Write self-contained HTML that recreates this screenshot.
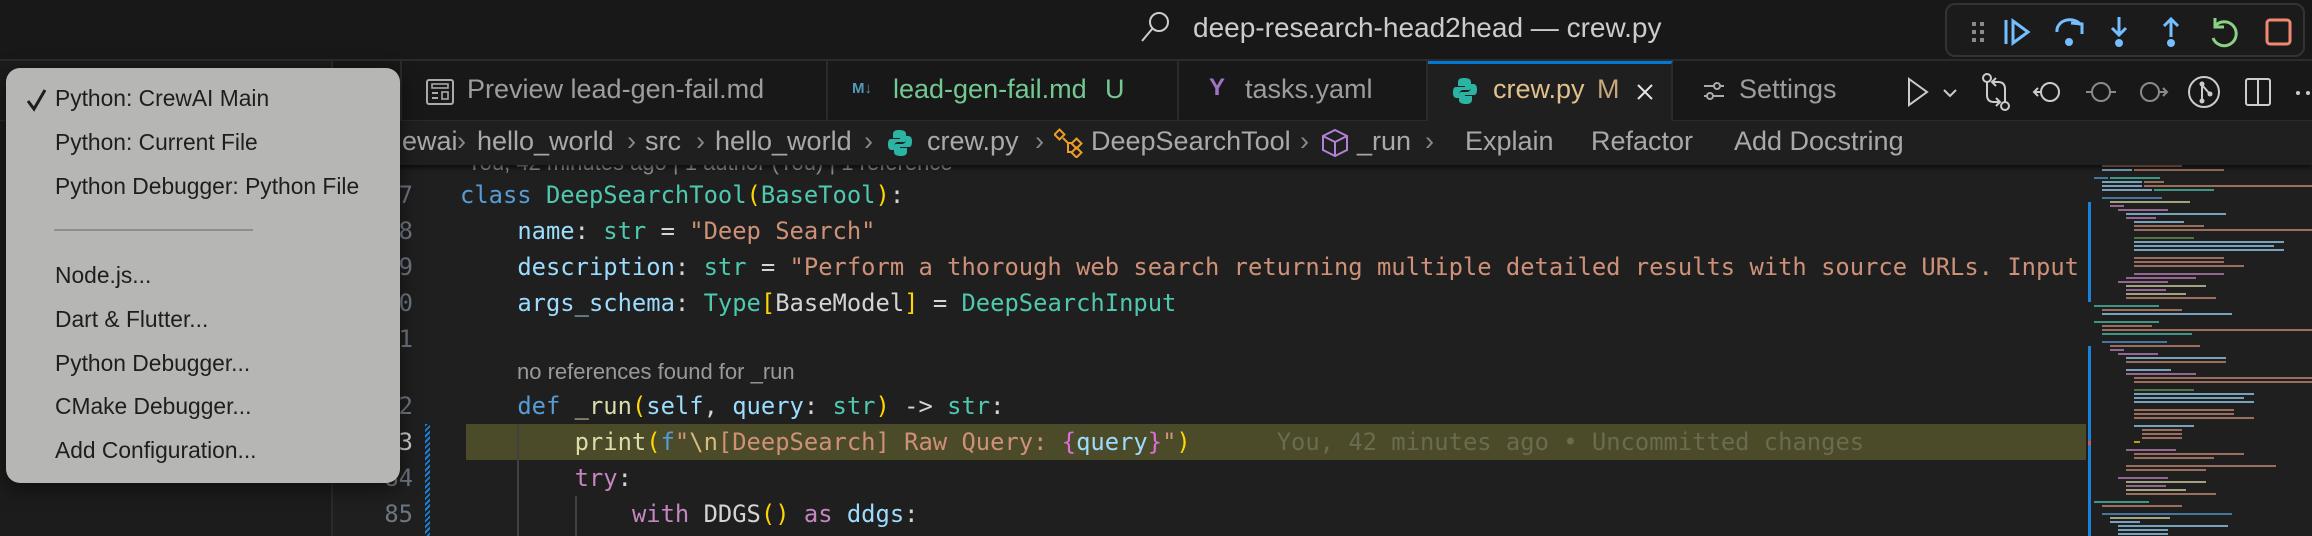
<!DOCTYPE html>
<html><head><meta charset="utf-8">
<style>
*{margin:0;padding:0;box-sizing:border-box}
body{width:2312px;height:536px;overflow:hidden;background:#1f1f1f;position:relative;font-family:"Liberation Sans",sans-serif}
.abs{position:absolute}
.ui{font-family:"Liberation Sans",sans-serif;font-size:27px;white-space:nowrap}
#title{left:0;top:0;width:2312px;height:61px;background:#181818;border-bottom:2px solid #2b2b2b}
#tabs{left:0;top:61px;width:2312px;height:60px;background:#181818;border-bottom:1px solid #2b2b2b}
.tab{position:absolute;top:0;height:59px;border-right:2px solid #2b2b2b;background:#181818}
#bc{left:335px;top:121px;width:1977px;height:44px;background:#1f1f1f;box-shadow:0 3px 4px rgba(0,0,0,.55);z-index:3}
.code{font-family:"DejaVu Sans Mono",monospace;font-size:23.8px;white-space:pre;position:absolute;left:460px;height:36px;line-height:36px;color:#d4d4d4}
.ln{font-family:"DejaVu Sans Mono",monospace;font-size:23.8px;position:absolute;left:300px;width:113px;height:36px;line-height:36px;color:#6e7681;text-align:right}
.k{color:#569cd6}.t{color:#4ec9b0}.v{color:#9cdcfe}.s{color:#ce9178}.p{color:#ffd700}.b{color:#da70d6}.f{color:#dcdcaa}.c{color:#c586c0}.e{color:#d7ba7d}.w{color:#d4d4d4}
#menu{left:6px;top:68px;width:394px;height:415px;background:#b6b6b4;border-radius:14px;z-index:10;box-shadow:0 6px 20px rgba(0,0,0,.5)}
.mi{position:absolute;left:49px;font-size:22.8px;color:#1e1e1e;font-family:"Liberation Sans",sans-serif;white-space:nowrap;line-height:30px}
</style></head><body>

<div id="title" class="abs">
  <svg class="abs" style="left:1138px;top:10px" width="34" height="34" viewBox="0 0 34 34"><circle cx="21" cy="12" r="9" fill="none" stroke="#cccccc" stroke-width="2"/><line x1="14.5" y1="18.5" x2="4" y2="31" stroke="#cccccc" stroke-width="2"/></svg>
  <div class="abs ui" style="left:1193px;top:12px;color:#cccccc;font-size:28px">deep-research-head2head — crew.py</div>
  <div class="abs" style="left:1945px;top:3px;width:360px;height:54px;border:2px solid #333;border-radius:10px;background:#1b1b1b">
    <svg class="abs" style="left:0;top:0" width="360" height="54" viewBox="0 0 360 54">
      <g fill="#8a8a8a"><rect x="25" y="17" width="4" height="4"/><rect x="33" y="17" width="4" height="4"/><rect x="25" y="25" width="4" height="4"/><rect x="33" y="25" width="4" height="4"/><rect x="25" y="33" width="4" height="4"/><rect x="33" y="33" width="4" height="4"/></g>
      <g stroke="#75beff" stroke-width="3" fill="none"><line x1="59" y1="15" x2="59" y2="39"/><path d="M66 16 L81 27 L66 38 Z"/></g>
      <g stroke="#75beff" stroke-width="3" fill="none"><path d="M110 27 A13 11 0 0 1 134 20"/><path d="M124 18 L135 19 L135 29"/></g><circle cx="122" cy="37" r="4" fill="#75beff"/>
      <g stroke="#75beff" stroke-width="3" fill="none"><line x1="172" y1="12" x2="172" y2="30"/><path d="M165 23 L172 30 L179 23"/></g><circle cx="172" cy="38" r="4" fill="#75beff"/>
      <g stroke="#75beff" stroke-width="3" fill="none"><line x1="224" y1="14" x2="224" y2="32"/><path d="M217 21 L224 14 L231 21"/></g><circle cx="224" cy="38" r="4" fill="#75beff"/>
      <g stroke="#89d185" stroke-width="3" fill="none"><path d="M268 21 A12 12 0 1 1 266 33"/><path d="M268 13 L268 22 L277 22"/></g>
      <rect x="320" y="15" width="23" height="24" rx="3" fill="none" stroke="#f48771" stroke-width="3"/>
    </svg>
  </div>
</div>

<div id="tabs" class="abs">
  <div class="tab" style="left:0;width:333px;background:#1c1c1c"></div>
  <div class="tab" style="left:333px;width:69px"></div>
  <div class="tab" style="left:402px;width:426px">
    <svg class="abs" style="left:24px;top:18px" width="28" height="26" viewBox="0 0 28 26"><rect x="1" y="1" width="26" height="24" rx="2" fill="none" stroke="#aaa" stroke-width="2"/><rect x="6" y="5" width="16" height="4" fill="none" stroke="#aaa" stroke-width="1.6"/><line x1="6" y1="14" x2="12" y2="14" stroke="#aaa" stroke-width="2"/><line x1="6" y1="19" x2="12" y2="19" stroke="#aaa" stroke-width="2"/><rect x="16" y="13" width="6" height="7" fill="none" stroke="#aaa" stroke-width="1.6"/></svg>
    <div class="abs ui" style="left:65px;top:13px;color:#9d9d9d">Preview lead-gen-fail.md</div>
  </div>
  <div class="tab" style="left:828px;width:351px">
    <div class="abs" style="left:24px;top:19px;color:#519aba;font-size:15px;font-weight:bold;font-family:'Liberation Sans',sans-serif">M↓</div>
    <div class="abs ui" style="left:65px;top:13px;color:#73c991">lead-gen-fail.md</div>
    <div class="abs ui" style="left:277px;top:13px;color:#73c991">U</div>
  </div>
  <div class="tab" style="left:1179px;width:249px">
    <div class="abs ui" style="left:30px;top:13px;color:#a074c4;font-weight:bold;font-size:24px">Y</div>
    <div class="abs ui" style="left:66px;top:13px;color:#9d9d9d">tasks.yaml</div>
  </div>
  <div class="tab" style="left:1428px;width:245px;background:#1f1f1f;border-top:3px solid #0078d4;height:60px">
    <svg class="abs" style="left:24px;top:13px" width="26" height="28" viewBox="0 0 26 28"><path d="M12 1 C6 1 6 4 6 6 V9 H13 V10 H4 C1 10 1 14 1 16 C1 20 3 21 5 21 H7 V17 C7 15 9 13 11 13 H17 C19 13 19 11 19 10 V5 C19 2 16 1 12 1 Z" fill="#2bb3a3"/><path d="M14 27 C20 27 20 24 20 22 V19 H13 V18 H22 C25 18 25 14 25 12 C25 8 23 7 21 7 H19 V11 C19 13 17 15 15 15 H9 C7 15 7 17 7 18 V23 C7 26 10 27 14 27 Z" fill="#2bb3a3"/></svg>
    <div class="abs ui" style="left:65px;top:10px;color:#e2c08d">crew.py</div>
    <div class="abs ui" style="left:169px;top:10px;color:#e2c08d;opacity:.85">M</div>
    <svg class="abs" style="left:208px;top:19px" width="18" height="18" viewBox="0 0 18 18"><path d="M2 2 L16 16 M16 2 L2 16" stroke="#e8e8e8" stroke-width="2"/></svg>
  </div>
  <svg class="abs" style="left:1703px;top:20px" width="22" height="20" viewBox="0 0 22 20"><line x1="1" y1="5" x2="21" y2="5" stroke="#aaa" stroke-width="2"/><line x1="1" y1="15" x2="21" y2="15" stroke="#aaa" stroke-width="2"/><circle cx="14" cy="5" r="3" fill="#181818" stroke="#aaa" stroke-width="2"/><circle cx="7" cy="15" r="3" fill="#181818" stroke="#aaa" stroke-width="2"/></svg>
  <div class="abs ui" style="left:1739px;top:13px;color:#9d9d9d">Settings</div>
  <svg class="abs" style="left:1900px;top:10px" width="412" height="40" viewBox="1900 10 412 40">
    <g fill="none" stroke="#cccccc" stroke-width="2">
      <path d="M1909 18 L1927 31 L1909 44 Z"/>
      <path d="M1944 29 L1950 35 L1956 29"/>
      <circle cx="1987" cy="17" r="4"/><circle cx="2005" cy="45" r="4"/>
      <path d="M1987 21 V34 Q1987 41 1994 41 H1999 M1996 37 L2000 41 L1996 45"/>
      <path d="M2005 41 V28 Q2005 21 1998 21 H1993 M1996 17 L1992 21 L1996 25"/>
      <circle cx="2050" cy="31" r="9"/><path d="M2041 31 H2034 M2038 27 L2034 31 L2038 35"/>
    </g>
    <g fill="none" stroke="#8a8a8a" stroke-width="2"><circle cx="2101" cy="31" r="9"/><path d="M2086 31 H2092 M2110 31 H2116"/>
      <circle cx="2150" cy="31" r="9"/><path d="M2159 31 H2167 M2163 27 L2167 31 L2163 35"/></g>
    <g fill="none" stroke="#cccccc" stroke-width="2"><circle cx="2204" cy="31" r="15"/><line x1="2202" y1="22" x2="2202" y2="41"/><line x1="2202" y1="24" x2="2209" y2="32"/></g>
    <circle cx="2202" cy="23" r="2.5" fill="#ccc"/><circle cx="2202" cy="40" r="2.5" fill="#ccc"/><circle cx="2210" cy="33" r="2.5" fill="#ccc"/>
    <g fill="none" stroke="#cccccc" stroke-width="2"><rect x="2246" y="18" width="24" height="26" rx="2"/><line x1="2258" y1="18" x2="2258" y2="44"/></g>
    <circle cx="2298" cy="32" r="2" fill="#ccc"/><circle cx="2308" cy="32" r="2" fill="#ccc"/>
  </svg>
</div>

<!-- left pane behind menu -->
<div class="abs" style="left:0;top:122px;width:333px;height:414px;background:#1c1c1c;border-right:2px solid #2b2b2b"></div>

<div id="bc" class="abs ui" style="color:#a9a9a9">
  <span class="abs" style="left:67px;top:5px">ewai</span>
  <span class="abs" style="left:122px;top:5px;color:#888">›</span>
  <span class="abs" style="left:142px;top:5px">hello_world</span>
  <span class="abs" style="left:292px;top:5px;color:#888">›</span>
  <span class="abs" style="left:310px;top:5px">src</span>
  <span class="abs" style="left:361px;top:5px;color:#888">›</span>
  <span class="abs" style="left:380px;top:5px">hello_world</span>
  <span class="abs" style="left:529px;top:5px;color:#888">›</span>
  <svg class="abs" style="left:552px;top:8px" width="26" height="28" viewBox="0 0 26 28"><path d="M12 1 C6 1 6 4 6 6 V9 H13 V10 H4 C1 10 1 14 1 16 C1 20 3 21 5 21 H7 V17 C7 15 9 13 11 13 H17 C19 13 19 11 19 10 V5 C19 2 16 1 12 1 Z" fill="#2bb3a3"/><path d="M14 27 C20 27 20 24 20 22 V19 H13 V18 H22 C25 18 25 14 25 12 C25 8 23 7 21 7 H19 V11 C19 13 17 15 15 15 H9 C7 15 7 17 7 18 V23 C7 26 10 27 14 27 Z" fill="#2bb3a3"/></svg>
  <span class="abs" style="left:592px;top:5px">crew.py</span>
  <span class="abs" style="left:700px;top:5px;color:#888">›</span>
  <svg class="abs" style="left:719px;top:7px" width="30" height="30" viewBox="0 0 30 30"><g fill="none" stroke="#ee9d28" stroke-width="2"><rect x="2" y="3" width="7" height="7" transform="rotate(45 5.5 6.5)"/><rect x="19" y="12" width="7" height="7" transform="rotate(45 22.5 15.5)"/><rect x="19" y="21" width="7" height="7" transform="rotate(45 22.5 24.5)"/><path d="M9 10 L14 15 H19 M14 15 V24 H19"/></g></svg>
  <span class="abs" style="left:756px;top:5px">DeepSearchTool</span>
  <span class="abs" style="left:965px;top:5px;color:#888">›</span>
  <svg class="abs" style="left:986px;top:7px" width="28" height="30" viewBox="0 0 28 30"><g fill="none" stroke="#b180d7" stroke-width="2"><path d="M14 2 L26 8 V22 L14 28 L2 22 V8 Z"/><path d="M2 8 L14 14 L26 8 M14 14 V28"/></g></svg>
  <span class="abs" style="left:1022px;top:5px">_run</span>
  <span class="abs" style="left:1090px;top:5px;color:#888">›</span>
  <span class="abs" style="left:1130px;top:5px">Explain</span>
  <span class="abs" style="left:1256px;top:5px">Refactor</span>
  <span class="abs" style="left:1399px;top:5px">Add Docstring</span>
</div>

<!-- editor -->
<div class="abs" style="left:335px;top:150px;width:1751px;height:386px;overflow:hidden;z-index:1">
  <div style="position:absolute;left:0;top:0;width:2086px;height:536px;transform:translate(-335px,-150px)">
    <div class="abs" style="left:466px;top:424px;width:1620px;height:36px;background:#4b4a29"></div>
    <div class="abs" style="left:517px;top:424px;width:2px;height:112px;background:#404040"></div>
    <div class="abs" style="left:575px;top:496px;width:2px;height:40px;background:#404040"></div>
    <div class="abs" style="left:425px;top:424px;width:5px;height:112px;background:repeating-linear-gradient(135deg,#1b81d8 0 2px,transparent 2px 4px)"></div>
    <div class="abs" style="left:467px;top:148px;font-size:22px;color:#8a8a8a;white-space:nowrap;line-height:30px">You, 42 minutes ago | 1 author (You) | 1 reference</div>

    <div class="ln" style="top:177px">77</div>
    <div class="ln" style="top:213px">78</div>
    <div class="ln" style="top:249px">79</div>
    <div class="ln" style="top:285px">80</div>
    <div class="ln" style="top:321px">81</div>
    <div class="ln" style="top:388px">82</div>
    <div class="ln" style="top:424px;color:#cccccc">83</div>
    <div class="ln" style="top:460px">84</div>
    <div class="ln" style="top:496px">85</div>

    <div class="code" style="top:177px"><span class="k">class</span> <span class="t">DeepSearchTool</span><span class="p">(</span><span class="t">BaseTool</span><span class="p">)</span>:</div>
    <div class="code" style="top:213px">    <span class="v">name</span>: <span class="t">str</span> = <span class="s">"Deep Search"</span></div>
    <div class="code" style="top:249px">    <span class="v">description</span>: <span class="t">str</span> = <span class="s">"Perform a thorough web search returning multiple detailed results with source URLs. Input should be a specific search query."</span></div>
    <div class="code" style="top:285px">    <span class="v">args_schema</span>: <span class="t">Type</span><span class="p">[</span><span class="w">BaseModel</span><span class="p">]</span> = <span class="t">DeepSearchInput</span></div>
    <div class="abs" style="left:517px;top:357px;font-size:22px;color:#999;white-space:nowrap;line-height:30px">no references found for _run</div>
    <div class="code" style="top:388px">    <span class="k">def</span> <span class="f">_run</span><span class="p">(</span><span class="v">self</span>, <span class="v">query</span>: <span class="t">str</span><span class="p">)</span> -&gt; <span class="t">str</span>:</div>
    <div class="code" style="top:424px">        <span class="f">print</span><span class="p">(</span><span class="k">f</span><span class="s">"</span><span class="e">\n</span><span class="s">[DeepSearch] Raw Query: </span><span class="b">{</span><span class="v">query</span><span class="b">}</span><span class="s">"</span><span class="p">)</span>      <span style="color:#6b6b50">You, 42 minutes ago • Uncommitted changes</span></div>
    <div class="code" style="top:460px">        <span class="c">try</span>:</div>
    <div class="code" style="top:496px">            <span class="c">with</span> <span class="w">DDGS</span><span class="p">()</span> <span class="c">as</span> <span class="v">ddgs</span>:</div>
  </div>
</div>

<!-- minimap -->
<div class="abs" style="left:2086px;top:165px;width:226px;height:371px;background:#1f1f1f;overflow:hidden;z-index:2">
  <div class="abs" style="left:2px;top:37px;width:3px;height:100px;background:#1b81d8"></div>
  <div class="abs" style="left:2px;top:181px;width:3px;height:190px;background:#1b81d8"></div>
  <div class="abs" style="left:2px;top:276px;width:3px;height:4px;background:#e05252"></div>
  <svg class="abs" style="left:0;top:0" width="226" height="371" viewBox="0 0 226 371">
    <g opacity="0.7">
      <rect x="16" y="0" width="80" height="2" fill="#ce9178"/>
      <rect x="16" y="4" width="30" height="2" fill="#9cdcfe"/><rect x="48" y="4" width="90" height="2" fill="#ce9178"/>
      <rect x="8" y="12" width="14" height="2" fill="#569cd6"/><rect x="24" y="12" width="50" height="2" fill="#4ec9b0"/>
      <rect x="16" y="16" width="40" height="2" fill="#9cdcfe"/><rect x="58" y="16" width="20" height="2" fill="#ce9178"/>
      <rect x="16" y="20" width="40" height="2" fill="#9cdcfe"/><rect x="58" y="20" width="168" height="2" fill="#ce9178"/>
      <rect x="16" y="24" width="50" height="2" fill="#9cdcfe"/><rect x="68" y="24" width="60" height="2" fill="#4ec9b0"/>
      <rect x="16" y="32" width="60" height="2" fill="#569cd6"/>
      <rect x="24" y="36" width="80" height="2" fill="#dcdcaa"/>
      <rect x="24" y="40" width="14" height="2" fill="#c586c0"/>
      <rect x="32" y="44" width="50" height="2" fill="#c586c0"/>
      <rect x="40" y="48" width="100" height="2" fill="#9cdcfe"/>
      <rect x="40" y="52" width="30" height="2" fill="#c586c0"/>
      <rect x="48" y="56" width="50" height="2" fill="#9cdcfe"/>
      <rect x="48" y="60" width="70" height="2" fill="#ce9178"/>
      <rect x="48" y="64" width="178" height="2" fill="#ce9178"/>
      <rect x="48" y="72" width="60" height="2" fill="#6a9955"/>
      <rect x="48" y="76" width="150" height="2" fill="#9cdcfe"/>
      <rect x="48" y="80" width="140" height="2" fill="#9cdcfe"/>
      <rect x="48" y="84" width="150" height="2" fill="#9cdcfe"/>
      <rect x="48" y="92" width="90" height="2" fill="#ce9178"/>
      <rect x="48" y="96" width="90" height="2" fill="#ce9178"/>
      <rect x="48" y="100" width="110" height="2" fill="#ce9178"/>
      <rect x="48" y="108" width="90" height="2" fill="#c586c0"/>
      <rect x="40" y="112" width="70" height="2" fill="#c586c0"/>
      <rect x="32" y="116" width="50" height="2" fill="#c586c0"/>
      <rect x="40" y="120" width="80" height="2" fill="#dcdcaa"/>
      <rect x="40" y="124" width="40" height="2" fill="#c586c0"/>
      <rect x="40" y="128" width="60" height="2" fill="#dcdcaa"/>
      <rect x="40" y="132" width="90" height="2" fill="#ce9178"/>
      <rect x="8" y="140" width="65" height="2" fill="#4ec9b0"/>
      <rect x="16" y="144" width="80" height="2" fill="#ce9178"/>
      <rect x="16" y="148" width="130" height="2" fill="#9cdcfe"/>
      <rect x="8" y="156" width="65" height="2" fill="#4ec9b0"/>
      <rect x="16" y="160" width="50" height="2" fill="#ce9178"/>
      <rect x="16" y="164" width="210" height="2" fill="#ce9178"/>
      <rect x="16" y="168" width="90" height="2" fill="#4ec9b0"/>
      <rect x="16" y="176" width="65" height="2" fill="#569cd6"/>
      <rect x="24" y="180" width="90" height="2" fill="#ce9178"/>
      <rect x="24" y="184" width="14" height="2" fill="#c586c0"/>
      <rect x="32" y="188" width="40" height="2" fill="#c586c0"/>
      <rect x="40" y="192" width="100" height="2" fill="#9cdcfe"/>
      <rect x="40" y="196" width="100" height="2" fill="#ce9178"/>
      <rect x="40" y="204" width="45" height="2" fill="#9cdcfe"/>
      <rect x="40" y="208" width="70" height="2" fill="#c586c0"/>
      <rect x="48" y="212" width="178" height="2" fill="#ce9178"/>
      <rect x="48" y="216" width="178" height="2" fill="#ce9178"/>
      <rect x="48" y="224" width="60" height="2" fill="#6a9955"/>
      <rect x="48" y="228" width="120" height="2" fill="#9cdcfe"/>
      <rect x="48" y="232" width="110" height="2" fill="#9cdcfe"/>
      <rect x="48" y="236" width="120" height="2" fill="#9cdcfe"/>
      <rect x="48" y="244" width="100" height="2" fill="#ce9178"/>
      <rect x="48" y="248" width="100" height="2" fill="#ce9178"/>
      <rect x="48" y="252" width="120" height="2" fill="#ce9178"/>
      <rect x="48" y="260" width="60" height="2" fill="#9cdcfe"/>
      <rect x="56" y="264" width="40" height="2" fill="#ce9178"/>
      <rect x="56" y="268" width="40" height="2" fill="#ce9178"/>
      <rect x="56" y="272" width="40" height="2" fill="#ce9178"/>
      <rect x="48" y="276" width="6" height="2" fill="#ffd700"/>
      <rect x="40" y="284" width="50" height="2" fill="#c586c0"/>
      <rect x="48" y="288" width="110" height="2" fill="#ce9178"/>
      <rect x="48" y="292" width="80" height="2" fill="#ce9178"/>
      <rect x="40" y="300" width="150" height="2" fill="#ce9178"/>
      <rect x="40" y="304" width="80" height="2" fill="#ce9178"/>
      <rect x="32" y="312" width="50" height="2" fill="#c586c0"/>
      <rect x="40" y="316" width="80" height="2" fill="#dcdcaa"/>
      <rect x="40" y="320" width="40" height="2" fill="#c586c0"/>
      <rect x="40" y="324" width="60" height="2" fill="#dcdcaa"/>
      <rect x="40" y="328" width="90" height="2" fill="#ce9178"/>
      <rect x="8" y="336" width="55" height="2" fill="#4ec9b0"/>
      <rect x="16" y="340" width="80" height="2" fill="#ce9178"/>
      <rect x="16" y="348" width="130" height="2" fill="#569cd6"/>
      <rect x="24" y="352" width="60" height="2" fill="#dcdcaa"/>
      <rect x="24" y="356" width="30" height="2" fill="#9cdcfe"/>
      <rect x="32" y="360" width="110" height="2" fill="#9cdcfe"/>
      <rect x="32" y="364" width="50" height="2" fill="#9cdcfe"/>
      <rect x="32" y="368" width="50" height="2" fill="#9cdcfe"/>
    </g>
  </svg>
</div>

<!-- debug config menu -->
<div id="menu" class="abs">
  <svg class="abs" style="left:20px;top:20px" width="22" height="24" viewBox="0 0 22 24"><path d="M2 13 L8 21 L19 2" fill="none" stroke="#1e1e1e" stroke-width="3"/></svg>
  <div class="mi" style="top:15px">Python: CrewAI Main</div>
  <div class="mi" style="top:59px">Python: Current File</div>
  <div class="mi" style="top:103px">Python Debugger: Python File</div>
  <div class="abs" style="left:48px;top:161px;width:199px;height:2px;background:#8e8e8e"></div>
  <div class="mi" style="top:192px">Node.js...</div>
  <div class="mi" style="top:236px">Dart &amp; Flutter...</div>
  <div class="mi" style="top:280px">Python Debugger...</div>
  <div class="mi" style="top:323px">CMake Debugger...</div>
  <div class="mi" style="top:367px">Add Configuration...</div>
</div>

</body></html>
